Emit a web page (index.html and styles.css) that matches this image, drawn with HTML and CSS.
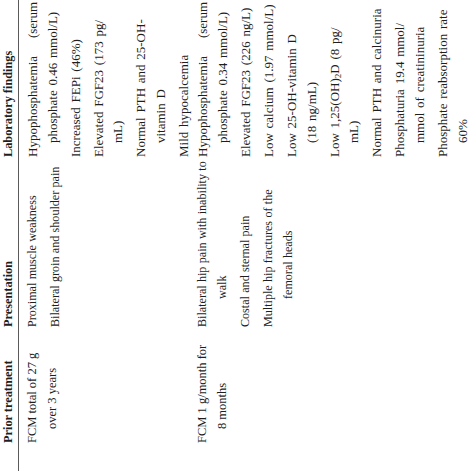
FILE: index.html
```html
<!DOCTYPE html>
<html>
<head>
<meta charset="utf-8">
<link rel="stylesheet" href="styles.css">
</head>
<body>
<div class="page">
  <div class="table">
    <div class="thead">
      <div class="th">Prior treatment</div>
      <div class="th">Presentation</div>
      <div class="th">Laboratory findings</div>
    </div>
    <div class="row first">
      <div class="cell c1">
        <p><span class="ln">FCM total of 27 g</span><span class="ln ind">over 3 years</span></p>
      </div>
      <div class="cell c2">
        <p><span class="ln">Proximal muscle weakness</span></p>
        <p><span class="ln">Bilateral groin and shoulder pain</span></p>
      </div>
      <div class="cell c3">
        <p><span class="ln j">Hypophosphatemia (serum</span><span class="ln ind">phosphate 0.46 mmol/L)</span></p>
        <p><span class="ln">Increased FEPi (46%)</span></p>
        <p><span class="ln">Elevated FGF23 (173 pg/</span><span class="ln ind">mL)</span></p>
        <p><span class="ln">Normal PTH and 25-OH-</span><span class="ln ind">vitamin D</span></p>
        <p><span class="ln">Mild hypocalcemia</span></p>
      </div>
    </div>
    <div class="row">
      <div class="cell c1">
        <p><span class="ln">FCM 1 g/month for</span><span class="ln ind">8 months</span></p>
      </div>
      <div class="cell c2">
        <p><span class="ln j">Bilateral hip pain with inability to</span><span class="ln ind2">walk</span></p>
        <p><span class="ln">Costal and sternal pain</span></p>
        <p><span class="ln">Multiple hip fractures of the</span><span class="ln ind2">femoral heads</span></p>
      </div>
      <div class="cell c3">
        <p><span class="ln j">Hypophosphatemia (serum</span><span class="ln ind">phosphate 0.34 mmol/L)</span></p>
        <p><span class="ln">Elevated FGF23 (226 ng/L)</span></p>
        <p><span class="ln">Low calcium (1.97 mmol/L)</span></p>
        <p><span class="ln">Low 25-OH-vitamin D</span><span class="ln ind">(18 ng/mL)</span></p>
        <p><span class="ln">Low 1,25(OH)<sub>2</sub>D (8 pg/</span><span class="ln ind">mL)</span></p>
        <p><span class="ln">Normal PTH and calcinuria</span></p>
        <p><span class="ln">Phosphaturia 19.4 mmol/</span><span class="ln ind">mmol of creatininuria</span></p>
        <p><span class="ln">Phosphate reabsorption rate</span><span class="ln ind">60%</span></p>
      </div>
    </div>
  </div>
</div>
</body>
</html>
```
FILE: styles.css
```css
html, body {
  margin: 0;
  padding: 0;
  background: #ffffff;
}

.page {
  width: 474px;
  height: 474px;
  overflow: hidden;
  background: #ffffff;
  transform: rotate(-90deg);
  font-family: "Liberation Serif", "Times New Roman", serif;
  color: #1e1e1e;
}

.table {
  margin-left: 3px;
  width: 620px;
}

.thead,
.row {
  display: grid;
  grid-template-columns: 116px 170px 160px;
  padding-left: 28px;
}

.thead {
  height: 18px;
  border-bottom: 1px solid #5a5a5a;
  font-weight: bold;
  font-size: 12.3px;
  line-height: 17px;
}

.row.first {
  padding-top: 4px;
}

.cell {
  font-size: 12.5px;
  line-height: 19.5px;
}

.c1 {
  padding-right: 4px;
}

.c2 {
  font-size: 12.1px;
  word-spacing: 0.3px;
  padding-right: 5px;
}

.c3 {
  font-size: 13px;
  word-spacing: 1.5px;
  padding-right: 5px;
}

.cell p {
  margin: 0;
}

.cell p + p {
  margin-top: 3.6px;
}

.ln {
  display: block;
  white-space: nowrap;
}

.ln.j {
  text-align: justify;
  text-align-last: justify;
}

.ln.ind {
  padding-left: 14px;
}

.ln.ind2 {
  padding-left: 28px;
}

sub {
  font-size: 0.7em;
  line-height: 0;
  vertical-align: -0.25em;
}
```
